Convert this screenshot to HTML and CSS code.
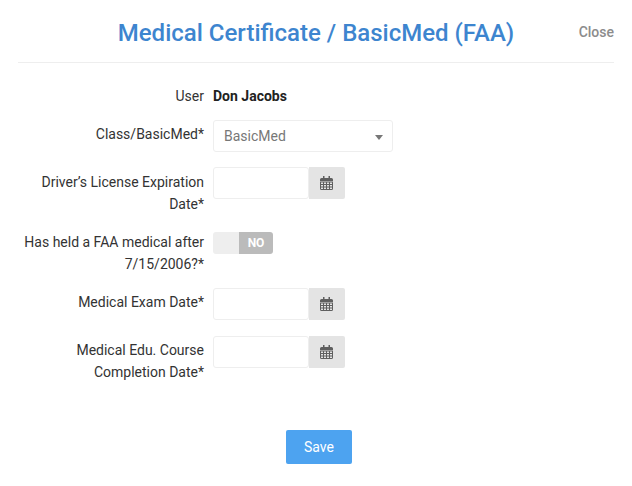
FILE: index.html
```html
<!DOCTYPE html>
<html>
<head>
    <title>Medical Certificate / BasicMed (FAA)</title>
    <link rel="stylesheet" href="styles.css">
</head>
<body>
    <svg class="icon-defs" width="0" height="0">
        <symbol id="calendar" viewBox="0 0 13 14">
            <path fill="#5f5f5f" d="M3 0h1.500v2H8.500V0H10v2h1.500A1.500 1.500 0 0 1 13 3.500V5H0V3.500A1.500 1.500 0 0 1 1.500 2H3z"/>
            <path fill="#5f5f5f" fill-rule="evenodd" d="M0 5.500h13v7A1.500 1.500 0 0 1 11.500 14h-10A1.500 1.500 0 0 1 0 12.500zM1 6.500v1.500h2V6.500zM4 6.500v1.500h2V6.500zM7 6.500v1.500h2V6.500zM10 6.500v1.500h2V6.500zM1 9v1.500h2V9zM4 9v1.500h2V9zM7 9v1.500h2V9zM10 9v1.500h2V9zM1 11.500V13h2v-1.500zM4 11.500V13h2v-1.500zM7 11.500V13h2v-1.500zM10 11.500V13h2v-1.500z"/>
        </symbol>
    </svg>

    <div class="modal">
        <div class="modal-header">
            <h1>Medical Certificate / BasicMed (FAA)</h1>
            <a class="close-link">Close</a>
        </div>

        <div class="form">
            <div class="form-row row-user">
                <label>User</label>
                <div class="user-name">Don Jacobs</div>
            </div>

            <div class="form-row row-select">
                <label>Class/BasicMed*</label>
                <div class="select">
                    <span>BasicMed</span>
                    <span class="caret"></span>
                </div>
            </div>

            <div class="form-row row-license">
                <label>Driver’s License Expiration Date*</label>
                <div class="date-field">
                    <div class="date-input"></div>
                    <div class="date-button"><svg class="calendar-icon"><use href="#calendar"/></svg></div>
                </div>
            </div>

            <div class="form-row row-toggle">
                <label>Has held a FAA medical after 7/15/2006?*</label>
                <div class="toggle">
                    <div class="toggle-off"></div>
                    <div class="toggle-label">NO</div>
                </div>
            </div>

            <div class="form-row row-exam">
                <label>Medical Exam Date*</label>
                <div class="date-field">
                    <div class="date-input"></div>
                    <div class="date-button"><svg class="calendar-icon"><use href="#calendar"/></svg></div>
                </div>
            </div>

            <div class="form-row row-course">
                <label>Medical Edu. Course Completion Date*</label>
                <div class="date-field">
                    <div class="date-input"></div>
                    <div class="date-button"><svg class="calendar-icon"><use href="#calendar"/></svg></div>
                </div>
            </div>
        </div>

        <div class="form-actions">
            <button class="save-button">Save</button>
        </div>
    </div>
</body>
</html>
```

FILE: styles.css
```css
body {
    font-family: Roboto, "Liberation Sans", sans-serif;
    background: #fff;
    margin: 0;
    color: #333;
    font-size: 14px;
    line-height: 22px;
}

.icon-defs {
    display: block;
    height: 0;
}

.modal {
    padding: 0 18px;
}

.modal-header {
    display: flex;
    align-items: center;
    justify-content: center;
    position: relative;
    height: 62px;
    border-bottom: 1px solid #eee;
}

.modal-header h1 {
    margin: 4px 0 0;
    font-size: 24px;
    font-weight: 500;
    line-height: 30px;
    color: #3d85cf;
}

.close-link {
    position: absolute;
    right: 0;
    top: 21px;
    font-size: 14px;
    font-weight: 500;
    color: #8c8c8c;
}

.form {
    padding-top: 22px;
}

.form-row {
    display: flex;
    gap: 9px;
}

.form-row label {
    width: 186px;
    text-align: right;
    flex-shrink: 0;
}

.row-user {
    height: 24px;
    margin-bottom: 11px;
}

.user-name {
    font-weight: 700;
    color: #222;
}

.row-select {
    margin-bottom: 15px;
}

.row-select label {
    padding-top: 3px;
}

.select {
    width: 180px;
    height: 32px;
    box-sizing: border-box;
    border: 1px solid #eee;
    border-radius: 3px;
    padding: 0 9px 0 10px;
    display: flex;
    align-items: center;
    justify-content: space-between;
    color: #777;
}

.caret {
    width: 0;
    height: 0;
    border-left: 4.500px solid transparent;
    border-right: 4.500px solid transparent;
    border-top: 5px solid #777;
    margin-top: 2px;
}

.row-license label,
.row-exam label,
.row-course label {
    padding-top: 4px;
}

.date-field {
    display: flex;
    height: 32px;
}

.row-exam .date-field,
.row-course .date-field {
    margin-top: 1px;
}

.date-input {
    width: 96px;
    box-sizing: border-box;
    border: 1px solid #eee;
    border-radius: 3px;
    background: #fff;
}

.date-button {
    width: 36px;
    background: #e4e4e4;
    border-radius: 0 2px 2px 0;
    display: flex;
    align-items: center;
    justify-content: center;
}

.calendar-icon {
    width: 13px;
    height: 14px;
    margin: 0 1px 1px 0;
}

.row-license {
    margin-bottom: 16px;
}

.row-toggle {
    margin-bottom: 12px;
}

.toggle {
    display: flex;
    width: 60px;
    height: 22px;
    margin-top: 1px;
    border-radius: 3px;
    overflow: hidden;
}

.toggle-off {
    width: 26px;
    background: #eee;
}

.toggle-label {
    flex: 1;
    background: #bbb;
    color: #fff;
    font-size: 12px;
    font-weight: 700;
    text-align: center;
}

.row-exam {
    margin-bottom: 15px;
}

.form-actions {
    display: flex;
    justify-content: center;
    margin-top: 47px;
    padding-left: 6px;
}

.save-button {
    width: 66px;
    height: 34px;
    border: none;
    border-radius: 2px;
    background: #4da3f0;
    color: #fff;
    font-family: Roboto, "Liberation Sans", sans-serif;
    font-size: 14px;
}
```
